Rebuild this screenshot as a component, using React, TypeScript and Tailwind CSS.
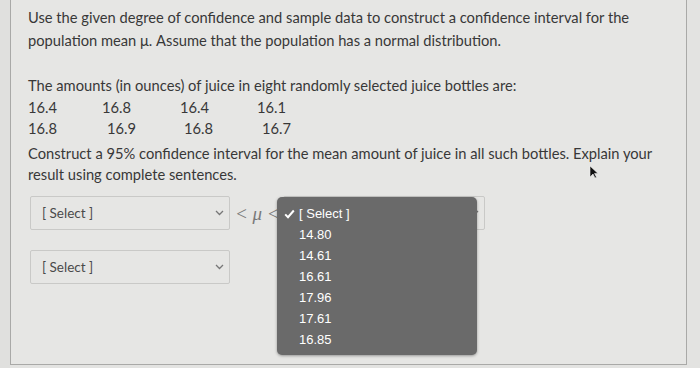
import React from "react";

const lato = { fontFamily: "Lato, 'Open Sans', sans-serif" };

function Chevron() {
  return (
    <svg width="9" height="6" viewBox="0 0 9 6" className="shrink-0">
      <path d="M1 1l3.5 3.5L8 1" fill="none" stroke="#777" strokeWidth="1.3" />
    </svg>
  );
}

function SelectBox({ className = "", label = true }: { className?: string; label?: boolean }) {
  return (
    <div
      className={`flex items-center justify-between w-[200px] h-[34px] border border-[#c9c9c7] rounded-[2px] bg-[#e6e6e4] pl-[11px] pr-[5px] ${className}`}
    >
      <span className="text-[13.5px] text-[#4a4a4a]">{label ? "[ Select ]" : ""}</span>
      <Chevron />
    </div>
  );
}

const options = ["14.80", "14.61", "16.61", "17.96", "17.61", "16.85"];

export default function App() {
  return (
    <div className="w-[700px] h-[368px] bg-[#e3e3e1] flex overflow-hidden" style={lato}>
      <div className="w-[10px] shrink-0 bg-[#e0e0de]" />
      <div className="relative w-[677px] h-[365px] border-l border-r border-b border-[#a9a9a7] bg-[#e6e6e4] pl-[17px] pt-[6px] text-[#383838]">
        <p className="text-[14.7px] leading-[23px]">
          Use the given degree of confidence and sample data to construct a confidence interval for the
          <br />
          population mean μ. Assume that the population has a normal distribution.
        </p>
        <p className="text-[14.7px] leading-[23px] mt-[22px]">
          The amounts (in ounces) of juice in eight randomly selected juice bottles are:
        </p>
        <div className="text-[14.7px] leading-[21px]">
          <div className="flex">
            <span className="w-[74px]">16.4</span>
            <span className="w-[78px]">16.8</span>
            <span className="w-[77px]">16.4</span>
            <span>16.1</span>
          </div>
          <div className="flex">
            <span className="w-[79px]">16.8</span>
            <span className="w-[77px]">16.9</span>
            <span className="w-[78px]">16.8</span>
            <span>16.7</span>
          </div>
        </div>
        <p className="text-[14.7px] leading-[21px] mt-[4px]">
          Construct a 95% confidence interval for the mean amount of juice in all such bottles. Explain your
          <br />
          result using complete sentences.
        </p>

        <div className="mt-[11px] ml-[2px] flex items-center">
          <SelectBox />
          <span
            className="ml-[5px] mr-[3px] text-[19px] text-[#7a7a7a] italic leading-none"
            style={{ fontFamily: "'Liberation Serif', serif" }}
          >
            &lt; μ &lt;
          </span>
          <SelectBox className="w-[202px]" label={false} />
        </div>
        <div className="mt-[20px] ml-[2px]">
          <SelectBox />
        </div>

        {/* open dropdown menu */}
        <div
          className="absolute left-[266px] top-[197px] w-[200px] h-[158px] rounded-[5px] bg-[#6a6a6a] shadow-[0_1px_3px_rgba(0,0,0,0.35)] pt-[6px] text-white text-[13px]"
          style={{ fontFamily: "'Liberation Sans', Arial, sans-serif" }}
        >
          <div className="flex items-center h-[21px] pl-[7px]">
            <svg width="11" height="10" viewBox="0 0 11 10" className="mr-[4px]">
              <path d="M1.2 5.4l2.8 2.8L9.8 1.5" fill="none" stroke="#fff" strokeWidth="2" />
            </svg>
            <span>[ Select ]</span>
          </div>
          {options.map((o) => (
            <div key={o} className="h-[21px] flex items-center pl-[22px]">
              {o}
            </div>
          ))}
        </div>

        {/* mouse cursor */}
        <svg className="absolute left-[578px] top-[165px]" width="10" height="14" viewBox="0 0 10 14">
          <path d="M1 1v11l3-3 2 4 1.5-.8-2-3.8H9z" fill="#111" stroke="#eee" strokeWidth="0.6" />
        </svg>
      </div>
    </div>
  );
}
